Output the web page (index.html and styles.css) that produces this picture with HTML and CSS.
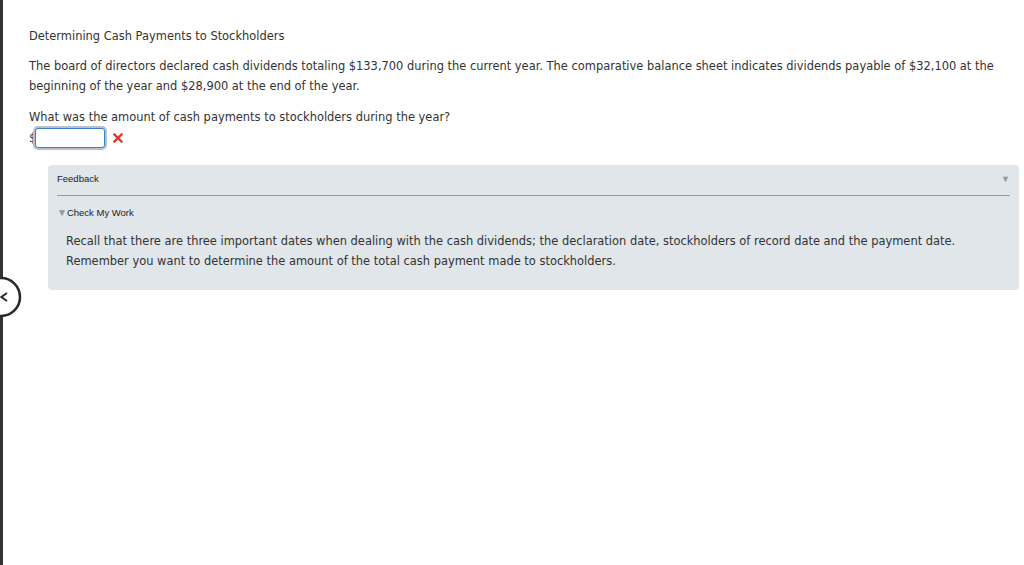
FILE: index.html
```html
<!DOCTYPE html>
<html>
<head>
<meta charset="utf-8">
<link rel="stylesheet" href="styles.css">
</head>
<body>
<div class="sidebar">
  <div class="collapse-btn">
    <svg width="23" height="42" viewBox="0 0 23 42"><circle cx="1" cy="21" r="19" fill="#fff" stroke="#2b2b2b" stroke-width="2.6"/><path d="M7 17 L1.5 21 L7 25" fill="none" stroke="#2b2b2b" stroke-width="2"/></svg>
  </div>
</div>
<main class="content">
  <p class="title">Determining Cash Payments to Stockholders</p>
  <p class="para">The board of directors declared cash dividends totaling $133,700 during the current year. The comparative balance sheet indicates dividends payable of $32,100 at the beginning of the year and $28,900 at the end of the year.</p>
  <p class="question">What was the amount of cash payments to stockholders during the year?</p>
  <div class="answer-row">
    <span class="dollar">$</span>
    <span class="input-box"></span>
    <svg class="wrong" width="10" height="10" viewBox="0 0 10 10"><path d="M1.5 1.5 L8.5 8.5 M8.5 1.5 L1.5 8.5" stroke="#e4372b" stroke-width="2.4" stroke-linecap="square"/></svg>
  </div>
  <section class="feedback">
    <div class="fb-head">
      <span class="fb-label">Feedback</span>
      <span class="fb-arrow">&#9660;</span>
    </div>
    <div class="fb-rule"></div>
    <div class="cmw"><span class="cmw-arrow">&#9660;</span>Check My Work</div>
    <p class="fb-text">Recall that there are three important dates when dealing with the cash dividends; the declaration date, stockholders of record date and the payment date. Remember you want to determine the amount of the total cash payment made to stockholders.</p>
  </section>
</main>
</body>
</html>
```
FILE: styles.css
```css
html, body {
  margin: 0;
  padding: 0;
  background: #fff;
}
body {
  display: flex;
  height: 565px;
  overflow: hidden;
  font-family: "DejaVu Sans", Verdana, sans-serif;
  color: #333;
}
.sidebar {
  position: relative;
  width: 3px;
  background: #333;
  flex: none;
}
.collapse-btn {
  position: absolute;
  left: 0;
  top: 276px;
  width: 23px;
  height: 42px;
}
.collapse-btn svg { display: block; }
.content {
  flex: 1;
  padding: 26px 5px 0 26px;
  font-size: 11.45px;
  line-height: 20px;
}
.content p { margin: 0; }
.title { margin-bottom: 10px !important; }
.para { margin-bottom: 11px !important; }
.answer-row {
  display: flex;
  align-items: center;
  height: 22px;
  margin-top: 0;
}
.dollar {
  width: 6px;
  overflow: visible;
  white-space: nowrap;
  font-size: 11.45px;
  color: #444;
}
.input-box {
  position: relative;
  width: 68px;
  height: 18px;
  border: 1px solid #3d7fc6;
  border-radius: 3px;
  box-shadow: 0 0 0 2px #b8c2cc;
  background: #fff;
}
.wrong {
  margin-left: 8px;
  display: block;
}
.feedback {
  margin-top: 16px;
  margin-left: 19px;
  background: #e0e6ea;
  border-radius: 4px;
  padding: 6px 9px 19px 9px;
  font-family: "Liberation Sans", Arial, sans-serif;
}
.fb-head {
  display: flex;
  justify-content: space-between;
  align-items: center;
  height: 16px;
  font-size: 9.5px;
  color: #222;
}
.fb-arrow {
  color: #999;
  font-size: 9px;
}
.fb-rule {
  height: 1px;
  background: #999;
  margin: 8px 0 9px 0;
}
.cmw {
  font-size: 9.5px;
  color: #222;
  height: 16px;
  line-height: 16px;
}
.cmw-arrow {
  color: #999;
  font-size: 10px;
  margin-right: 0;
}
.fb-text {
  margin: 10px 0 0 9px !important;
  font-family: "DejaVu Sans", Verdana, sans-serif;
  font-size: 11.45px;
  line-height: 20px;
  color: #333;
}
```
